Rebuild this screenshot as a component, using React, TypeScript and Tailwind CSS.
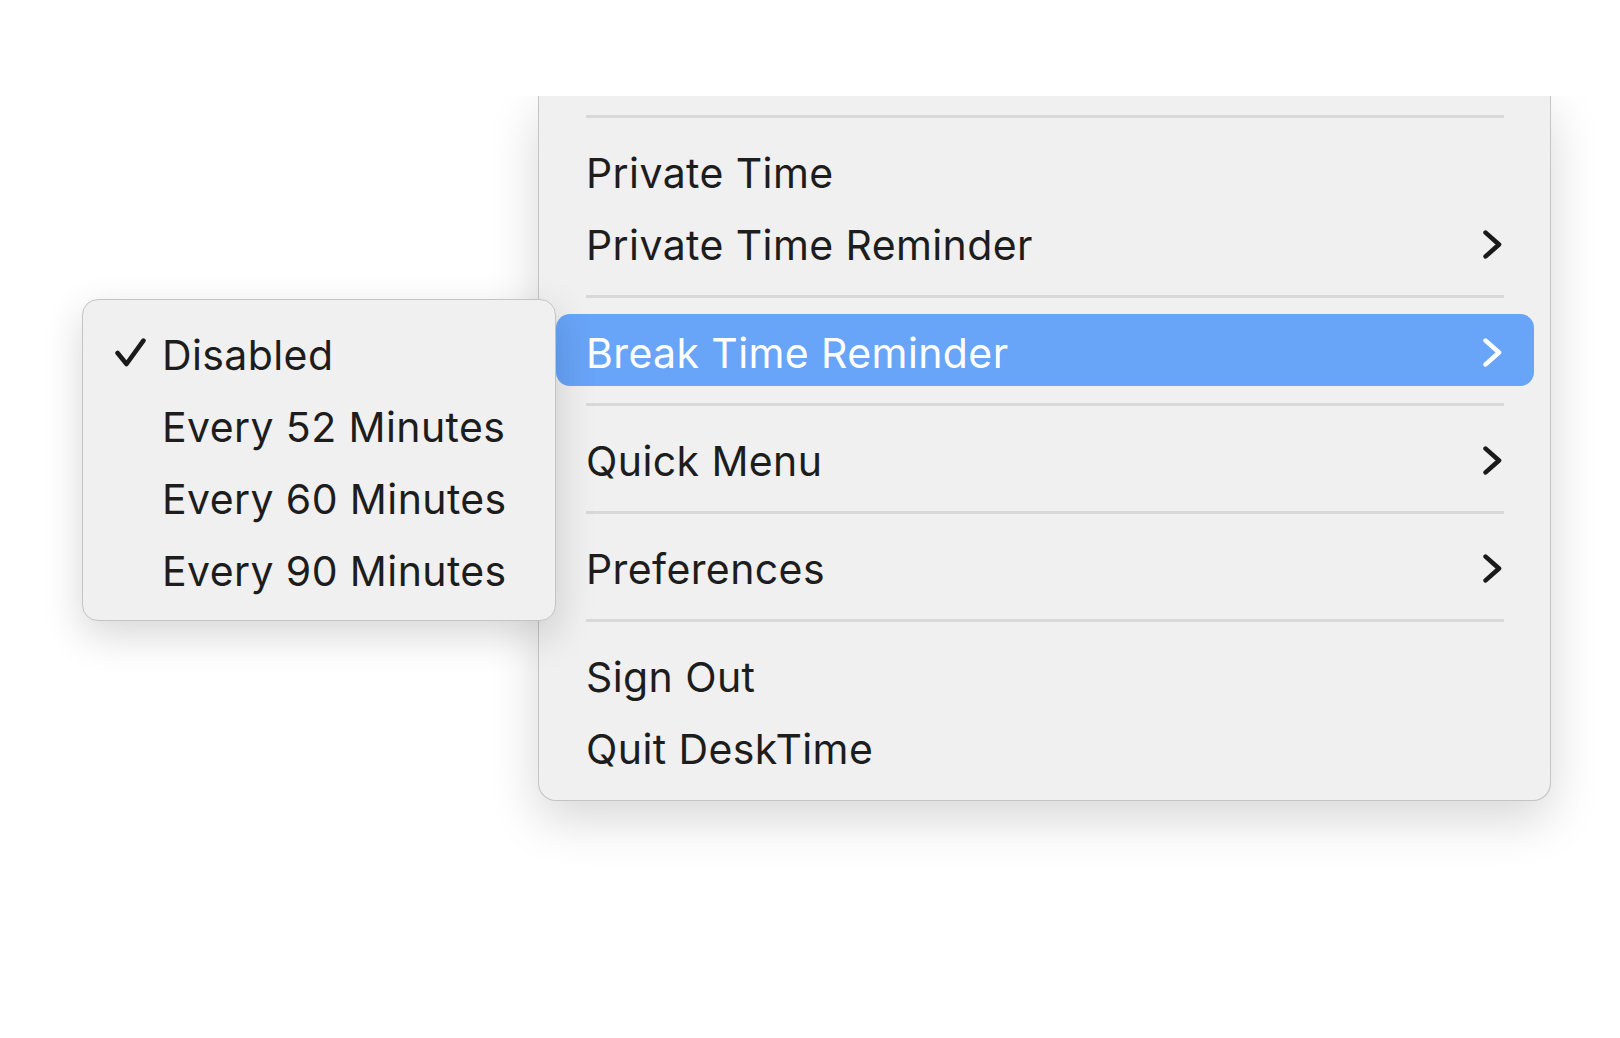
const font = { fontFamily: "Inter, 'Noto Sans', sans-serif" };

type Row =
  | { kind: "sep" }
  | { kind: "item"; label: string; sub?: boolean; active?: boolean };

const MAIN_ROWS: Row[] = [
  { kind: "sep" },
  { kind: "item", label: "Private Time" },
  { kind: "item", label: "Private Time Reminder", sub: true },
  { kind: "sep" },
  { kind: "item", label: "Break Time Reminder", sub: true, active: true },
  { kind: "sep" },
  { kind: "item", label: "Quick Menu", sub: true },
  { kind: "sep" },
  { kind: "item", label: "Preferences", sub: true },
  { kind: "sep" },
  { kind: "item", label: "Sign Out" },
  { kind: "item", label: "Quit DeskTime" },
];

const INTERVALS = [
  { label: "Disabled", checked: true },
  { label: "Every 52 Minutes" },
  { label: "Every 60 Minutes" },
  { label: "Every 90 Minutes" },
];

function Chevron({ light }: { light?: boolean }) {
  return (
    <svg className="mt-[4px]" width="19" height="29" viewBox="0 0 19 29" fill="none">
      <path
        d="M2.6 2.6 L16 14.5 L2.6 26.4"
        stroke={light ? "#ffffff" : "#1a1a1a"}
        strokeWidth="4.6"
        strokeLinecap="round"
        strokeLinejoin="round"
      />
    </svg>
  );
}

function Check() {
  return (
    <svg width="31" height="29" viewBox="0 0 31 29" fill="none">
      <path
        d="M2.6 15 L11.5 26 L28.4 2.6"
        stroke="#1a1a1a"
        strokeWidth="4.6"
        strokeLinecap="round"
        strokeLinejoin="round"
      />
    </svg>
  );
}

function MenuRow({ row }: { row: Row }) {
  if (row.kind === "sep") {
    return (
      <div className="flex h-[36px] items-center pl-[47px] pr-[46px]">
        <div className="h-[3px] w-full bg-[#d8d8d8]" />
      </div>
    );
  }
  return (
    <div
      className={
        row.active
          ? "ml-[17px] mr-[16px] flex h-[72px] items-center justify-between rounded-[14px] bg-[#68a4f8] pl-[30px] pr-[32px] text-white"
          : "ml-[17px] mr-[16px] flex h-[72px] items-center justify-between pl-[30px] pr-[32px] text-[#1d1d1d]"
      }
    >
      <span className="pt-[6px] text-[41px] leading-none tracking-[0.4px]">{row.label}</span>
      {row.sub && <Chevron light={row.active} />}
    </div>
  );
}

export default function App() {
  return (
    <div className="h-[1038px] w-[1620px] overflow-hidden bg-white" style={font}>
      <div className="relative mt-[96px] h-[942px] overflow-hidden">
        {/* main menu, cropped at the top */}
        <div className="ml-[538px] w-[1013px] rounded-b-[18px] border-x border-b border-[#c4c4c4] bg-[#f0f0f0] pt-[2px] pb-[18px] shadow-[0_18px_50px_rgba(0,0,0,0.16)]">
          {MAIN_ROWS.map((row, i) => (
            <MenuRow key={i} row={row} />
          ))}
        </div>

        {/* submenu */}
        <div className="absolute left-[82px] top-[203px] z-10 w-[474px] rounded-[16px] border border-[#c4c4c4] bg-[#f0f0f0] py-[16px] shadow-[0_14px_40px_rgba(0,0,0,0.16)]">
          {INTERVALS.map((item) => (
            <div key={item.label} className="flex h-[72px] items-center pl-[32px] text-[#1d1d1d]">
              <div className="flex w-[47px] items-center">{item.checked && <Check />}</div>
              <span className="pt-[6px] text-[41px] leading-none tracking-[0.4px]">{item.label}</span>
            </div>
          ))}
        </div>
      </div>
    </div>
  );
}
